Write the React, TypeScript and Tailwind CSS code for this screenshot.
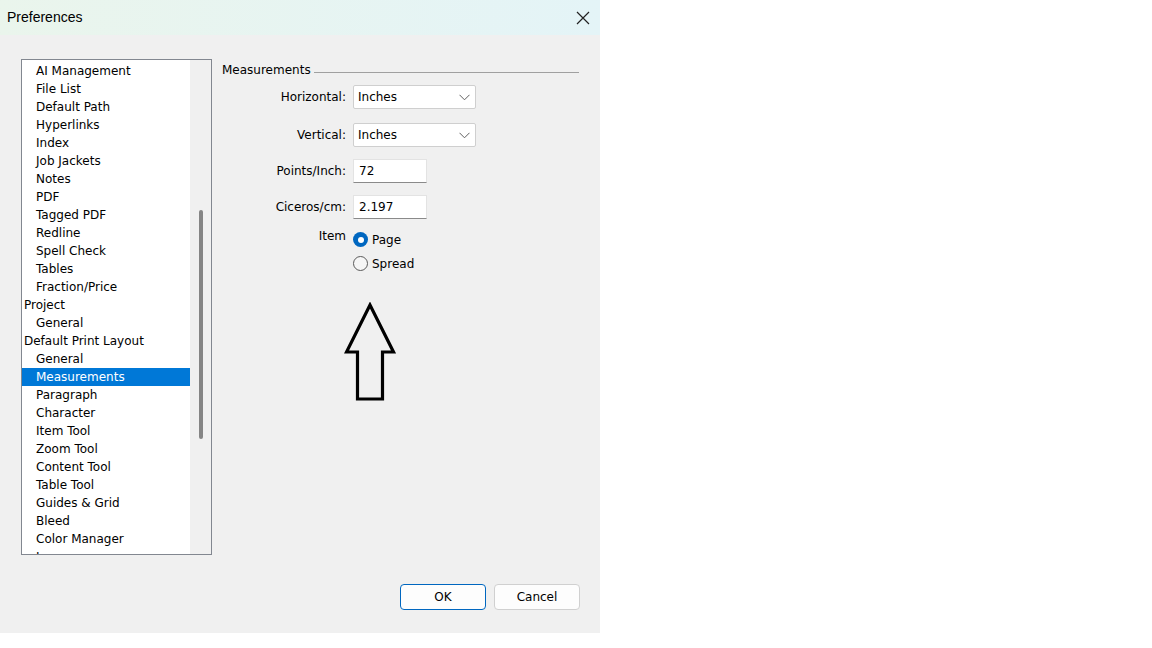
const items: { label: string; indent: boolean; selected?: boolean }[] = [
  { label: 'AI Management', indent: true },
  { label: 'File List', indent: true },
  { label: 'Default Path', indent: true },
  { label: 'Hyperlinks', indent: true },
  { label: 'Index', indent: true },
  { label: 'Job Jackets', indent: true },
  { label: 'Notes', indent: true },
  { label: 'PDF', indent: true },
  { label: 'Tagged PDF', indent: true },
  { label: 'Redline', indent: true },
  { label: 'Spell Check', indent: true },
  { label: 'Tables', indent: true },
  { label: 'Fraction/Price', indent: true },
  { label: 'Project', indent: false },
  { label: 'General', indent: true },
  { label: 'Default Print Layout', indent: false },
  { label: 'General', indent: true },
  { label: 'Measurements', indent: true, selected: true },
  { label: 'Paragraph', indent: true },
  { label: 'Character', indent: true },
  { label: 'Item Tool', indent: true },
  { label: 'Zoom Tool', indent: true },
  { label: 'Content Tool', indent: true },
  { label: 'Table Tool', indent: true },
  { label: 'Guides & Grid', indent: true },
  { label: 'Bleed', indent: true },
  { label: 'Color Manager', indent: true },
  { label: 'Layers', indent: true },
]

function Chevron() {
  return (
    <svg width="11" height="7" viewBox="0 0 11 7" className="text-[#5f5f5f]">
      <path d="M0.5 0.8 L5.5 5.8 L10.5 0.8" fill="none" stroke="currentColor" strokeWidth="1" />
    </svg>
  )
}

function Select({ value }: { value: string }) {
  return (
    <div className="w-[123px] h-[24px] bg-white border border-[#cfcfcf] rounded-[2px] flex items-center justify-between pl-[4px] pr-[5px]">
      <span>{value}</span>
      <Chevron />
    </div>
  )
}

function Field({ value }: { value: string }) {
  return (
    <div className="w-[74px] h-[24px] bg-white border border-[#e3e3e3] border-b-[#8a8a8a] flex items-center pl-[5px]">
      {value}
    </div>
  )
}

function Row({ label, children, mt }: { label: string; children: React.ReactNode; mt: string }) {
  return (
    <div className={`flex items-center ${mt}`}>
      <div className="w-[131px] text-right pr-[7px]">{label}</div>
      {children}
    </div>
  )
}

export default function App() {
  return (
    <div className="w-[1152px] h-[648px] bg-white text-[12px] text-black" style={{ fontFamily: 'Tahoma, "DejaVu Sans", "Liberation Sans", sans-serif' }}>
      <div className="w-[600px] h-[633px] bg-[#f0f0f0] flex flex-col">
        <div className="h-[35px] flex items-center justify-between pl-[7px] pr-[10px] bg-gradient-to-r from-[#eaf5ec] to-[#e4f4f7]">
          <span className="text-[14px]" style={{ fontFamily: '"Liberation Sans", sans-serif' }}>Preferences</span>
          <svg width="14" height="14" viewBox="0 0 14 14">
            <path d="M1 1 L13 13 M13 1 L1 13" stroke="#222" strokeWidth="1.2" />
          </svg>
        </div>

        <div className="flex pl-[21px] pt-[24px]">
          <div className="w-[191px] h-[496px] border border-[#828790] bg-white flex overflow-hidden">
            <div className="flex-1 pt-[2px] overflow-hidden">
              {items.map((it, i) => (
                <div
                  key={i}
                  className={`h-[18px] leading-[18px] whitespace-nowrap ${it.indent ? 'pl-[14px]' : 'pl-[2px]'} ${it.selected ? 'bg-[#0078d7] text-white' : ''}`}
                >
                  {it.label}
                </div>
              ))}
            </div>
            <div className="w-[21px] bg-[#f0f0f0] flex justify-center pt-[150px]">
              <div className="w-[4px] h-[229px] bg-[#858585] rounded-full" />
            </div>
          </div>

          <div className="w-[357px] ml-[10px] flex flex-col">
            <div className="flex items-center pt-[2px] h-[19px]">
              <span className="leading-[14px]">Measurements</span>
              <div className="flex-1 ml-[3px] mt-[6px] h-px bg-[#a0a0a0]" />
            </div>
            <Row label="Horizontal:" mt="mt-[7px]"><Select value="Inches" /></Row>
            <Row label="Vertical:" mt="mt-[14px]"><Select value="Inches" /></Row>
            <Row label="Points/Inch:" mt="mt-[12px]"><Field value="72" /></Row>
            <Row label="Ciceros/cm:" mt="mt-[12px]"><Field value="2.197" /></Row>
            <div className="flex mt-[10px]">
              <div className="w-[131px] text-right pr-[7px] leading-[14px]">Item</div>
              <div className="flex flex-col gap-[9px] pt-[3px]">
                <div className="flex items-center gap-[4px] h-[15px]">
                  <div className="w-[15px] h-[15px] rounded-full bg-[#0067c0] flex items-center justify-center">
                    <div className="w-[6px] h-[6px] rounded-full bg-white" />
                  </div>
                  <span>Page</span>
                </div>
                <div className="flex items-center gap-[4px] h-[15px]">
                  <div className="w-[15px] h-[15px] rounded-full border border-[#5a5a5a] bg-[#f6f6f6]" />
                  <span>Spread</span>
                </div>
              </div>
            </div>
            <div className="ml-[122px] mt-[31px]">
              <svg width="54" height="100" viewBox="0 0 54 100">
                <path d="M26 3 L2.5 50 L13.5 50 L13.5 97 L38.5 97 L38.5 50 L49.5 50 Z" fill="none" stroke="#000" strokeWidth="3.2" strokeLinejoin="miter" />
              </svg>
            </div>
          </div>
        </div>

        <div className="flex justify-end gap-[8px] pr-[20px] mt-[29px]">
          <button className="w-[86px] h-[26px] bg-[#fdfdfd] border border-[#0067c0] rounded-[4px]">OK</button>
          <button className="w-[86px] h-[26px] bg-[#fdfdfd] border border-[#d0d0d0] rounded-[4px]">Cancel</button>
        </div>
      </div>
    </div>
  )
}
